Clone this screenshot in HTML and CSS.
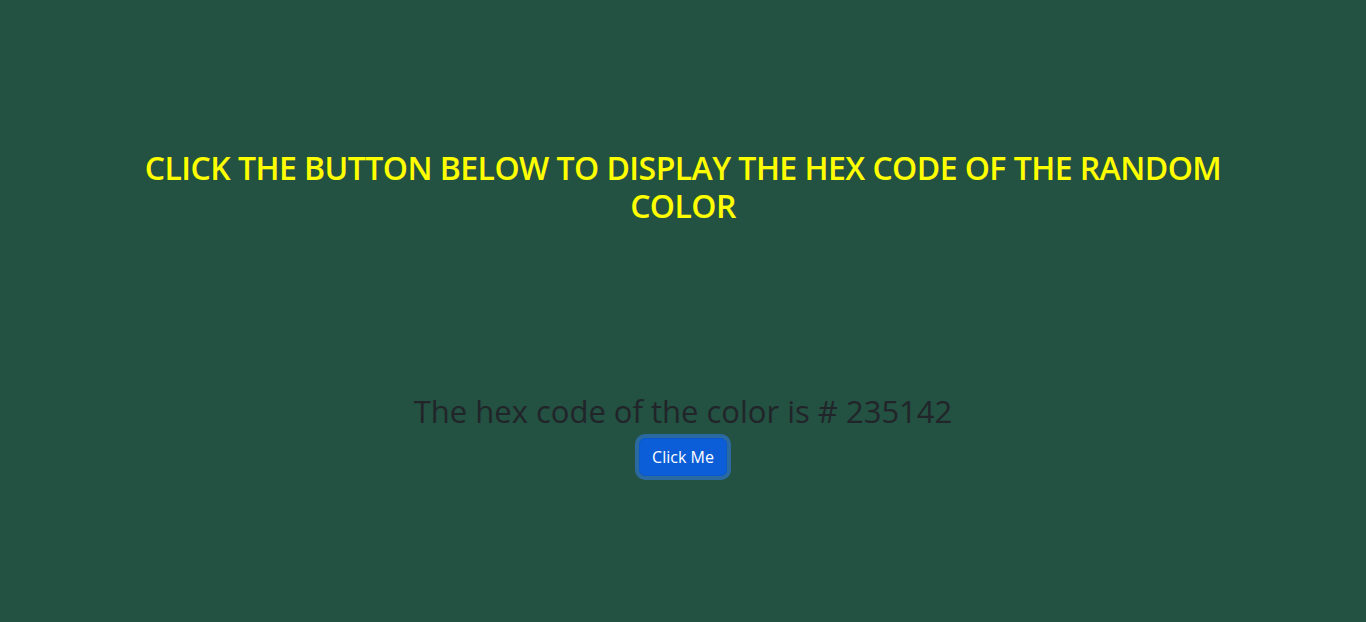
FILE: index.html
```html
<!DOCTYPE html>
<html lang="en">
<head>
<meta charset="utf-8">
<title>Random Hex Color</title>
<link rel="stylesheet" href="styles.css">
</head>
<body>
<main class="container">
  <h2 class="title">CLICK THE BUTTON BELOW TO DISPLAY THE HEX CODE OF THE RANDOM COLOR</h2>
  <section class="result">
    <h3 class="hex-text">The hex code of the color is # <span class="hex-value">235142</span></h3>
    <button class="btn btn-primary" type="button">Click Me</button>
  </section>
</main>
</body>
</html>
```

FILE: styles.css
```css
* {
  box-sizing: border-box;
}

html,
body {
  margin: 0;
  height: 100%;
}

body {
  background-color: #235142;
  color: #212529;
  font-family: "Open Sans", "Noto Sans", "Liberation Sans", sans-serif;
  font-size: 16px;
  line-height: 1.5;
}

.container {
  max-width: 1140px;
  margin: 0 auto;
  padding: 0 12px;
  text-align: center;
}

.title {
  margin: 0;
  padding-top: 149px;
  color: #ffff00;
  font-size: 32px;
  font-weight: 600;
  line-height: 1.2;
  letter-spacing: -0.55px;
}

.result {
  display: flex;
  flex-direction: column;
  align-items: center;
  margin-top: 167px;
}

.hex-text {
  margin: 0 0 8px;
  font-size: 31px;
  font-weight: 400;
  line-height: 1.2;
  color: #212529;
}

.btn {
  display: inline-block;
  padding: 6px 12px;
  font-family: inherit;
  font-size: 16px;
  line-height: 1.5;
  border: 1px solid transparent;
  border-radius: 6px;
  cursor: pointer;
}

.btn-primary {
  color: #fff;
  background-color: #0b5ed7;
  border-color: #0a58ca;
  box-shadow: 0 0 0 4px rgba(49, 132, 253, 0.5);
}
```
